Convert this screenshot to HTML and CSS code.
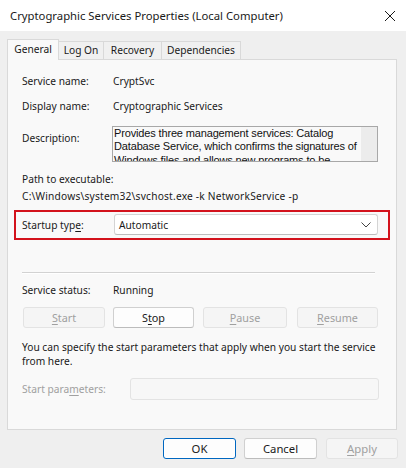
FILE: index.html
```html
<!DOCTYPE html>
<html lang="en">
<head>
<meta charset="utf-8">
<title>Cryptographic Services Properties</title>
<link rel="stylesheet" href="styles.css">
</head>
<body>
<div class="window">
  <div class="titlebar">
    <span class="title">Cryptographic Services Properties (Local Computer)</span>
    <svg class="close" width="12" height="12" viewBox="0 0 12 12"><path d="M1 1L11 11M11 1L1 11" stroke="#1a1a1a" stroke-width="1" fill="none"/></svg>
  </div>
  <div class="client">
    <div class="tabs">
      <div class="tab active">General</div>
      <div class="tab">Log On</div>
      <div class="tab">Recovery</div>
      <div class="tab">Dependencies</div>
    </div>
    <div class="panel">
      <div class="row r-name"><span class="lbl">Service name:</span><span class="val">CryptSvc</span></div>
      <div class="row r-disp"><span class="lbl">Display name:</span><span class="val">Cryptographic Services</span></div>
      <div class="row r-desc">
        <span class="lbl lbl-desc">Description:</span>
        <div class="textbox">
          <div class="tb-text">Provides three management services: Catalog Database Service, which confirms the signatures of Windows files and allows new programs to be installed</div>
          <div class="tb-scroll"></div>
        </div>
      </div>
      <div class="path-lbl">Path to executable:</div>
      <div class="path">C:\Windows\system32\svchost.exe -k NetworkService -p</div>
      <div class="startup">
        <span class="lbl">Startup typ<u>e</u>:</span>
        <div class="select">
          <span>Automatic</span>
          <svg class="chev" width="10" height="6" viewBox="0 0 10 6"><path d="M0.5 0.5L5 5L9.5 0.5" stroke="#444" stroke-width="1" fill="none"/></svg>
        </div>
      </div>
      <div class="sep"></div>
      <div class="row r-status"><span class="lbl">Service status:</span><span class="val">Running</span></div>
      <div class="btnrow">
        <div class="btn disabled"><u>S</u>tart</div>
        <div class="btn">S<u>t</u>op</div>
        <div class="btn disabled"><u>P</u>ause</div>
        <div class="btn disabled"><u>R</u>esume</div>
      </div>
      <p class="hint">You can specify the start parameters that apply when you start the service from here.</p>
      <div class="params">
        <span class="lbl-params">Start para<u>m</u>eters:</span>
        <div class="input"></div>
      </div>
    </div>
    <div class="footer">
      <div class="btn fbtn default">OK</div>
      <div class="btn fbtn">Cancel</div>
      <div class="btn fbtn disabled"><u>A</u>pply</div>
    </div>
  </div>
</div>
</body>
</html>
```
FILE: styles.css
```css
* { box-sizing: border-box; }
html, body { margin: 0; padding: 0; }
body {
  width: 406px;
  height: 468px;
  overflow: hidden;
  font-family: "Noto Sans", "Segoe UI", sans-serif;
  font-size: 10.2px;
  color: #1a1a1a;
  background: #efefef;
}
.window { width: 406px; height: 468px; display: flex; flex-direction: column; }
.titlebar {
  height: 31px;
  background: #ffffff;
  display: flex;
  align-items: center;
  justify-content: space-between;
  padding: 0 10px 0 10px;
}
.title { font-size: 11.3px; color: #1a1a1a; }
.client { flex: 1; background: #efefef; padding: 8px 9px 0 7px; }
.tabs { display: flex; align-items: flex-end; height: 20px; position: relative; z-index: 1; }
.tab {
  height: 18px;
  line-height: 17px;
  border: 1px solid #d9d9d9;
  border-bottom: none;
  background: #f0f0f0;
  text-align: center;
  margin-left: -1px;
}
.tab:nth-child(1) { width: 52px; margin-left: 0; }
.tab:nth-child(2) { width: 46px; }
.tab:nth-child(3) { width: 59px; }
.tab:nth-child(4) { width: 80px; }
.tab.active {
  height: 21px;
  line-height: 19px;
  background: #f9f9f9;
  margin-bottom: -1px;
}
.panel {
  height: 371px;
  background: #f9f9f9;
  border: 1px solid #d9d9d9;
  padding: 13px 18px 0 14px;
}
.row { display: flex; align-items: flex-start; line-height: 16px; }
.lbl { width: 90px; flex: none; }
.val { padding-left: 1px; }
.r-disp { margin-top: 9px; }
.r-desc { margin-top: 12px; }
.lbl-desc { padding-top: 4px; }
.textbox {
  flex: 1;
  height: 36px;
  border: 1px solid #a8a8a8;
  background: #f9f9f9;
  display: flex;
  overflow: hidden;
}
.tb-text {
  flex: 1;
  padding: 0 0 0 1px;
  line-height: 13.3px;
  overflow: hidden;
  font-family: "Liberation Sans", Arial, sans-serif;
  font-size: 11px;
  letter-spacing: -0.15px;
  color: #111;
}
.tb-scroll { width: 16px; background: #ececec; flex: none; }
.path-lbl { margin-top: 9px; line-height: 16px; }
.path { margin-top: 1px; line-height: 16px; letter-spacing: 0.2px; }
.startup {
  margin: 6px -12px 0 -8px;
  border: 2px solid #d3121c;
  padding: 2px 10px 3px 6px;
  display: flex;
  align-items: center;
}
.startup .lbl { width: 92px; }
.select {
  flex: 1;
  height: 21px;
  background: #ffffff;
  border: 1px solid #d4d4d4;
  border-bottom-color: #bdbdbd;
  border-radius: 3px;
  display: flex;
  align-items: center;
  justify-content: space-between;
  padding: 0 6px 0 4px;
}
.sep { margin-top: 32px; height: 2px; border-top: 1px solid #d2d2d2; border-bottom: 1px solid #ffffff; width: 353px; }
.r-status { margin-top: 8px; }
.btnrow { display: flex; margin-top: 9px; margin-left: 1px; font-size: 10.8px; }
.btn {
  height: 21px;
  border: 1px solid #d0d0d0;
  border-bottom-color: #bcbcbc;
  border-radius: 3px;
  background: #fdfdfd;
  display: flex;
  align-items: center;
  justify-content: center;
}
.btnrow .btn:nth-child(1) { width: 82px; }
.btnrow .btn:nth-child(2) { width: 81px; margin-left: 8px; }
.btnrow .btn:nth-child(3) { width: 84px; margin-left: 9px; }
.btnrow .btn:nth-child(4) { width: 81px; margin-left: 10px; }
.btn.disabled { background: #f5f5f5; border-color: #e3e3e3; color: #a0a0a0; }
.hint { margin: 12px 0 0 0; line-height: 14px; }
.params { display: flex; align-items: center; margin-top: 10px; }
.lbl-params { width: 108px; color: #a0a0a0; }
.input { flex: 1; height: 22px; background: #f7f7f7; border: 1px solid #e3e3e3; border-radius: 3px; margin-right: -1px; }
.footer { display: flex; justify-content: flex-end; margin-top: 8px; margin-right: -1px; font-size: 11.3px; }
.footer .fbtn:nth-child(1) { width: 73px; }
.footer .fbtn:nth-child(2) { width: 73px; margin-left: 8px; }
.footer .fbtn:nth-child(3) { width: 72px; margin-left: 9px; }
.fbtn.default { border: 1px solid #0067c0; background: #fdfdfd; box-shadow: inset 0 0 0 1px #ffffff; }
u { text-decoration-thickness: 1px; text-underline-offset: 2px; }
```
